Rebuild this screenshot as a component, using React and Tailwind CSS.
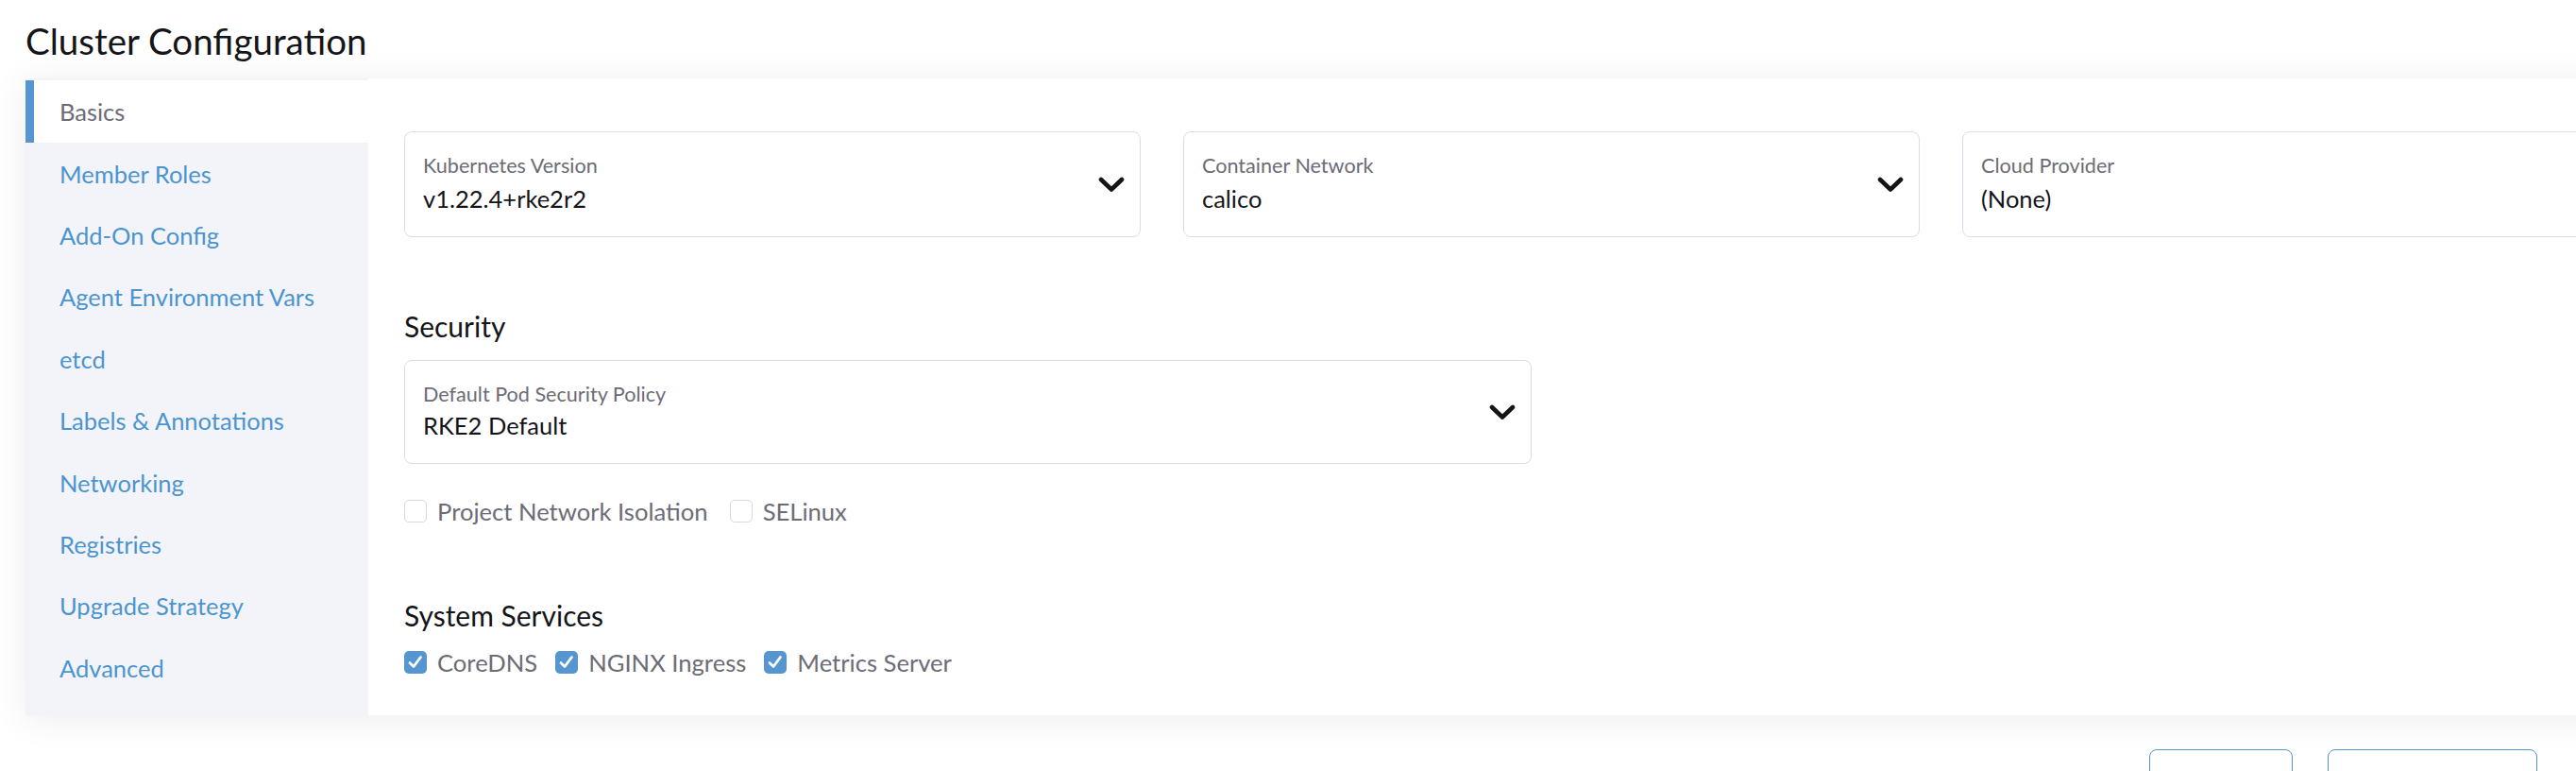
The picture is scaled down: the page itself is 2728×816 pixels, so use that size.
import React from "react";

const navItems = [
  "Basics",
  "Member Roles",
  "Add-On Config",
  "Agent Environment Vars",
  "etcd",
  "Labels & Annotations",
  "Networking",
  "Registries",
  "Upgrade Strategy",
  "Advanced",
];

function Chevron() {
  return (
    <svg width="28" height="17" viewBox="0 0 28 17" className="shrink-0">
      <path d="M3 3 L14 13.5 L25 3" fill="none" stroke="#141419" strokeWidth="4.6" strokeLinecap="round" strokeLinejoin="round" />
    </svg>
  );
}

function Select({ label, value, className = "", h = "h-[112px]", gap = "mt-[8px]" }) {
  return (
    <div className={`${h} rounded-[8px] border border-[#dcdee7] bg-white flex items-start justify-between pl-[19px] pr-[16px] ${className}`}>
      <div className="pt-[22px] flex flex-col">
        <div className="text-[21.6px] leading-[26px] text-[#6c6c76]">{label}</div>
        <div className={`${gap} text-[25.5px] leading-[32px] text-[#141419]`}>{value}</div>
      </div>
      <div className="self-center">
        <Chevron />
      </div>
    </div>
  );
}

function Checkbox({ checked, label, className = "" }) {
  return (
    <label className={`flex items-center ${className}`}>
      {checked ? (
        <span className="w-[24px] h-[24px] rounded-[5px] bg-[#5596d0] flex items-center justify-center">
          <svg width="24" height="24" viewBox="0 0 24 24">
            <path d="M6 12.5 L10 16.5 L17.5 6.5" fill="none" stroke="white" strokeWidth="2.8" strokeLinecap="round" strokeLinejoin="round" />
          </svg>
        </span>
      ) : (
        <span className="w-[24px] h-[24px] rounded-[5px] border border-[#d6d8e2] bg-white" />
      )}
      <span className="ml-[11px] text-[25.6px] leading-[30px] text-[#6c6c76]">{label}</span>
    </label>
  );
}

export default function App() {
  return (
    <div className="w-[2728px] h-[816px] overflow-hidden bg-white" style={{ fontFamily: "Lato, 'Noto Sans', sans-serif" }}>
      <h1 className="pl-[27px] pt-[24px] text-[38.5px] leading-[39px] text-[#141419] font-normal">Cluster Configuration</h1>
      <div className="mt-[20px] ml-[27px] w-[2900px] h-[674px] flex bg-white shadow-[0_4px_36px_rgba(0,0,0,0.08)]">
        <nav className="w-[363px] shrink-0 bg-[#f3f4f9] pt-[2px]">
          {navItems.map((item, i) =>
            i === 0 ? (
              <div key={item} className="h-[66px] flex items-center bg-white border-l-[9px] border-[#5596d0] pl-[27px] text-[25.5px] text-[#6c6c76]">
                {item}
              </div>
            ) : (
              <div key={item} className="h-[65.4px] flex items-center pl-[36px] text-[25.5px] text-[#4b94d0]">
                {item}
              </div>
            )
          )}
        </nav>
        <main className="flex-1 pl-[38px] pt-[56px]">
          <div className="grid grid-cols-[780px_780px_780px] gap-[45px]">
            <Select label="Kubernetes Version" value="v1.22.4+rke2r2" gap="mt-[6px]" />
            <Select label="Container Network" value="calico" gap="mt-[6px]" />
            <Select label="Cloud Provider" value="(None)" gap="mt-[6px]" />
          </div>
          <h3 className="mt-[76px] text-[30px] leading-[36px] text-[#141419] font-normal">Security</h3>
          <Select className="mt-[18px] w-[1194px]" h="h-[110px]" gap="mt-[4px]" label="Default Pod Security Policy" value="RKE2 Default" />
          <div className="mt-[35px] flex items-center">
            <Checkbox label="Project Network Isolation" />
            <Checkbox className="ml-[23px]" label="SELinux" />
          </div>
          <h3 className="mt-[77px] text-[30px] leading-[36px] text-[#141419] font-normal">System Services</h3>
          <div className="mt-[17px] flex items-center">
            <Checkbox checked label="CoreDNS" />
            <Checkbox checked className="ml-[19px]" label="NGINX Ingress" />
            <Checkbox checked className="ml-[19px]" label="Metrics Server" />
          </div>
        </main>
      </div>
      <div className="mt-[36px] flex justify-end gap-[37px] pr-[41px]">
        <div className="w-[152px] h-[70px] rounded-[8px] border-[1.5px] border-[#5596d0]" />
        <div className="w-[222px] h-[70px] rounded-[8px] border-[1.5px] border-[#5596d0]" />
      </div>
    </div>
  );
}
